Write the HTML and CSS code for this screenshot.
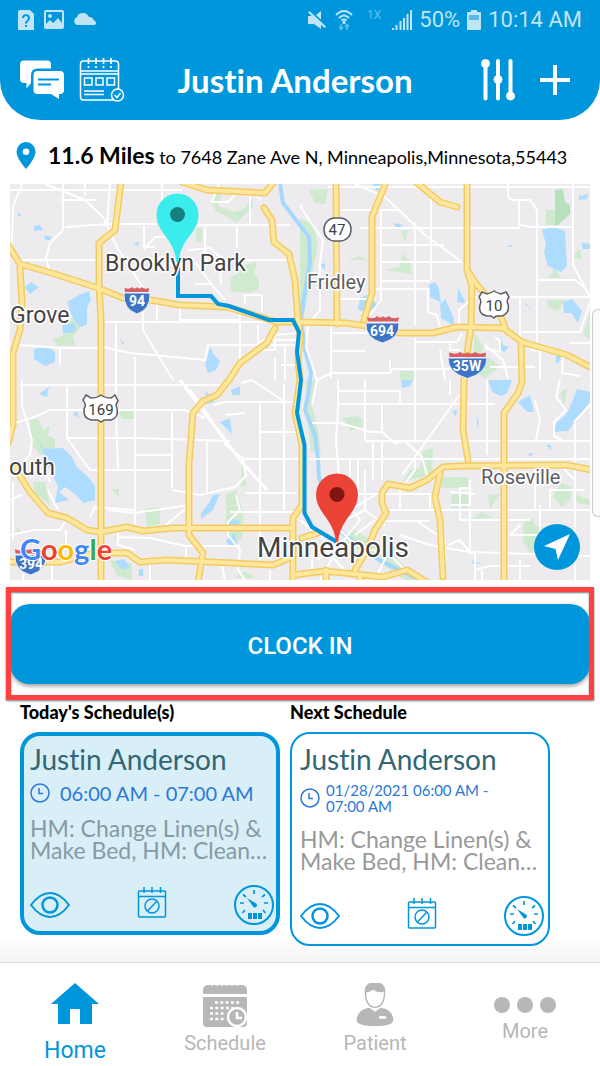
FILE: index.html
```html
<!DOCTYPE html>
<html lang="en">
<head>
<meta charset="utf-8">
<meta name="viewport" content="width=device-width, initial-scale=1">
<title>Home</title>
<link rel="stylesheet" href="styles.css">
</head>
<body>
<header class="header">
  <div class="status">
    <div class="status-group status-left">
      <svg width="16" height="20" viewBox="0 0 16 20"><path fill="currentColor" fill-rule="evenodd" d="M2 0H12L16 4V20H1Q0 20 0 19V2Q0 0 2 0ZM4 8H6Q6 6 8 6T10 8Q10 9.300 8.500 10.500Q7 11.600 7 13.500H9Q9 12.400 10.500 11Q12 9.800 12 8Q12 4.200 8 4.200T4 8ZM7 15V17H9V15Z"/></svg>
      <svg width="20" height="20" viewBox="0 0 20 20"><path fill="currentColor" fill-rule="evenodd" d="M2 0H18Q20 0 20 2V17Q20 19 18 19H2Q0 19 0 17V2Q0 0 2 0ZM2 2V14L6 10L9 13L14 8L18 13V2ZM6 4A2 2 0 1 1 6 8A2 2 0 1 1 6 4Z"/></svg>
      <svg width="22" height="20" viewBox="0 0 22 20"><path fill="currentColor" d="M4 15A4 4 0 0 1 3 7.200Q4 3 9 3Q13 3 15 7Q19 7 19.500 10Q22 11 22 13Q22 15 19 15Z"/></svg>
    </div>
    <div class="status-group status-right">
      <svg width="20" height="20" viewBox="0 0 20 20"><path fill="currentColor" d="M1 6H5L7 8L14 14V19L7 14H1ZM9 5L14 1V9.500ZM1 2.500L2.500 1L19 16.500L17.500 18Z"/></svg>
      <svg width="20" height="22" viewBox="0 0 20 22" fill="none" stroke="currentColor" stroke-width="2"><path d="M2 6Q10-2 18 6M5 9Q10 4 15 9M7.500 11.500Q10 9.500 12.500 11.500"/><circle cx="10" cy="13.500" r=".7"/><path opacity=".5" d="M7 15V20M5 18L7 20.500L9 18M13 21V16M11 18L13 15.500L15 18" stroke-width="1.500"/></svg>
      <span class="carrier">1X</span>
      <svg width="20" height="20" viewBox="0 0 20 20"><path fill="none" stroke="currentColor" stroke-width="2" d="M1 20V18M4.500 20V15M8.500 20V11M12 20V8M15.500 20V4M19 20V0"/></svg>
      <span>50%</span>
      <svg width="14" height="20" viewBox="0 0 14 20"><path fill="currentColor" d="M4 0H10V2H13Q14 2 14 3V19Q14 20 13 20H1Q0 20 0 19V3Q0 2 1 2H4Z"/><path fill="#5cb9e6" d="M2 5H12V10H2Z"/></svg>
      <span>10:14 AM</span>
    </div>
  </div>
  <div class="titlebar">
    <div class="tools">
      <button class="icon-button" aria-label="Messages"><svg width="44" height="40" viewBox="20 60 44 40"><path fill="#fff" d="M24 60.500H47Q51 60.500 51 64.500V82H32L26.500 88.500V83H24Q20 83 20 79V64.500Q20 60.500 24 60.500Z"/><path fill="#fff" stroke="#0096dc" stroke-width="5" paint-order="stroke" d="M37.500 71H60Q64 71 64 75V90Q64 94 60 94H59V99L51 94H37.500Q33.500 94 33.500 90V75Q33.500 71 37.500 71Z"/><path stroke="#0096dc" stroke-width="2" d="M38 79.500H59M38 84.500H51"/></svg></button>
      <button class="icon-button" aria-label="Calendar"><svg width="46" height="46" viewBox="79 57 46 46" fill="none" stroke="#fff" stroke-width="1.500"><rect x="80.500" y="61" width="38" height="39" rx="3"/><path stroke-width="1.700" d="M88.500 58V64M96 58V64M103.500 58V64M111 58V64M88.500 66V68M96 66V68M103.500 66V68M111 66V68M81 71H118M81 74H118M84 91H104M84 94.500H104"/><path d="M84.500 78H92V85H84.500ZM96 78H103V85H96ZM107 78H114.500V85H107Z"/><circle cx="117.500" cy="95" r="6" fill="#0096dc"/><path d="M114.500 95L117 97.500L120.500 93"/></svg></button>
    </div>
    <h1 class="title">Justin Anderson</h1>
    <div class="tools tools-right">
      <button class="icon-button" aria-label="Filters"><svg width="34" height="42" viewBox="481 59 34 42" fill="#fff" stroke="#fff"><path stroke-width="4" stroke-linecap="round" d="M485.500 62V98.500M498 61V98.500M510.500 61V98"/><circle cx="485.500" cy="63.500" r="4"/><circle cx="498" cy="79.500" r="4"/><circle cx="510.500" cy="96" r="4"/></svg></button>
      <button class="icon-button" aria-label="Add"><svg width="30" height="30" viewBox="0 0 30 30"><path stroke="#fff" stroke-width="4" d="M15 0V30M0 15H30"/></svg></button>
    </div>
  </div>
</header>

<main class="content">
  <p class="address">
    <svg width="20" height="28" viewBox="0 0 20 28"><path fill="#0096dc" fill-rule="evenodd" d="M10 0A9.700 9.700 0 0 1 19.500 10Q19.500 16 10 27Q.5 16 .5 10A9.700 9.700 0 0 1 10 0ZM10 6.500A3.300 3.300 0 1 0 10 13.100A3.300 3.300 0 1 0 10 6.500Z"/></svg>
    <span><strong>11.6 Miles</strong> to 7648 Zane Ave N, Minneapolis,Minnesota,55443</span>
  </p>

  <section class="map" aria-label="Route map">
    <svg class="map-art" viewBox="10 184 580 396">
      <defs>
        <path id="highways" d="M8 245L20 264L55 274L98 288L123 298L150 300L180 305L227 307L277 322L300 322L345 323L367 326L400 333L433 333L457 327L503 328L522 342L567 355L592 368M20 268L22 300L20 330L13 353V425L8 443M121 182L115 230L99 243V285L101 320V582M182 182L207 190L265 193L274 182M264 208L272 220L274 242L289 254L295 280L298 322L300 335L298 360L300 380L295 413L302 445L302 505L293 518V582M275 328L267 343L240 363L229 380L217 395L203 401L193 413L189 463V535L203 553L198 582M15 468L30 492L48 513L67 518L87 530L100 532L127 527L143 531L173 528H293M8 562H60L95 553H127L140 562L167 560L233 563L273 565L292 557M336 182L337 324M386 182L372 217V293L364 320M416 182L440 202L457 207M467 182V270L472 287L471 327L468 347L464 380L463 430L468 460M467 270L477 285L497 307L505 327M521 343L522 382L518 393L504 413V582M592 470L567 465L460 466L443 467L427 480L410 488L388 484L382 493V503L386 513L375 530L367 550L355 570M440 473L435 497L440 520L443 577M293 575L325 571L383 577L407 570L430 584M326 570V582M360 577V582M302 538L318 533"/>
      </defs>
      <rect x="10" y="184" width="580" height="396" fill="#eeebef"/>
      <g fill="#cfeacf">
        <path d="M215 194L222 193L218 206L234 212L244 209L252 199L253 207L244 215L236 223L228 217L216 211L212 204Z"/>
        <path d="M196 228H202V242H196ZM230 278L239 272L243 265L257 262L254 273L259 281V289L249 293L231 291Z"/>
        <path d="M67 320L77 317L80 328L73 336L75 345L57 346L53 339L66 334Z"/>
        <path d="M30 418L38 419L43 430L50 426L48 435L55 439V448L40 455L31 443Z"/>
        <path d="M309 190L328 189L325 204L315 203ZM300 218L314 225L318 245L310 285L304 315H300ZM348 260L359 256L368 260ZM401 231L408 230L405 243ZM402 253L410 261L412 274L385 270L400 267Z"/>
        <path d="M546 210H555V225H546ZM573 257L580 248L582 260ZM548 278L555 267L561 278ZM547 300H565L558 311L548 307ZM583 335L590 312V340ZM474 333L484 347L478 358H490L500 367L485 378L474 371Z"/>
        <path fill="#b7e1bd" d="M555 190L563 189L565 202L570 205V214L558 225H555Z"/>
        <path d="M305 380H315L312 405L318 430L321 453L311 452L307 415ZM343 418L357 416L363 420L362 428L350 431ZM423 451L433 448L432 475L403 481L410 469L420 468ZM440 477H468V488H442ZM452 494H468V508H451ZM488 495L500 494L490 508ZM471 519L482 512L492 518Z"/>
        <path d="M523 522L533 519L536 526L545 528L540 548L530 553L523 542ZM553 496L561 482L573 488L570 500L562 507ZM575 494L590 500V505L577 503ZM400 371H414V380H400ZM560 393L567 388L564 407Z"/>
        <path d="M120 411H134V419H121ZM111 489H119V498ZM145 509L160 507V524L147 527ZM226 494L236 490L243 512V535L236 545L228 537L226 522ZM33 482H45L50 505L34 492ZM242 463L247 485L241 488ZM110 560L132 563V580L117 576ZM15 525L21 531L18 537ZM245 571L256 578H235ZM353 529L385 548L420 580H405L380 563L345 541Z"/>
      </g>
      <g fill="#addcff">
        <path d="M67 302L79 295L89 291L91 300L87 308V325L80 327L73 318ZM62 325L75 323L76 331L63 334ZM17 278L25 287L31 282L39 287L30 294ZM34 349L47 346L55 352V362L45 366L34 359ZM34 226L40 225L43 230L34 231ZM44 235L52 237L50 240L45 240Z"/>
        <path d="M205 365L210 347L214 355L220 361L216 370L208 373ZM18 211L21 216H18ZM72 287L75 293ZM134 243L140 242L137 246ZM120 338L125 345L122 344ZM39 394L49 387L47 397ZM73 414L77 411L79 418ZM111 421L117 429L113 424Z"/>
        <path d="M36 435L43 449L63 448L72 457L77 467L88 477L95 486V500L83 503L75 494L65 487L59 492L69 500L55 503L58 486L51 473Z"/>
        <path d="M542 230L553 227L565 231L566 250L567 266L561 272L548 266L544 253L546 244ZM579 196L588 194L587 199L579 200ZM582 243L590 244V249H582ZM393 223L404 225L397 228ZM429 285L435 282L439 288L441 304L445 299L449 307L454 319V326L441 318L440 302L430 297ZM458 287L466 304L457 302ZM563 302L572 299L582 311L578 323L571 313L564 313ZM557 347L561 360L556 364V350ZM360 298L367 295L379 306L367 312L358 310ZM319 265L325 263V270ZM372 184H381L378 192ZM524 301L532 310L526 305ZM506 247L512 245V247ZM500 335L503 345L509 347L504 352L500 350Z"/>
        <path d="M488 380H512L507 393L501 396L492 392ZM518 402L530 395L534 412L527 412ZM577 389L590 392V402L579 416L568 431L553 432L557 422L566 415L573 400ZM401 380H413L410 386L402 388ZM476 416L479 422L478 429ZM546 444L552 446L550 450ZM527 455L532 452V456ZM472 560L481 564H473ZM452 411L457 410L456 417ZM220 422L230 418L232 434ZM231 390L240 386V395H232ZM205 390L215 402L207 404ZM201 513L209 503L213 495L220 494L213 510L201 519ZM230 519L240 520L237 529L229 527ZM226 541L235 532L237 545L230 547ZM115 561L124 559L130 567L122 570ZM139 569H143V576H139Z"/>
      </g>
      <path fill="none" stroke="#a6d8ff" stroke-width="4" d="M280 184L283 203L299 224L309 237L310 262L305 290L301 320L305 350L311 372L309 390L305 410L315 435L318 460L319 478L342 533L381 561L420 580"/>
      <g fill="none" stroke="#fff" stroke-width="2" stroke-linejoin="round">
        <path d="M10 190H182M22 184L13 207L12 243M63 184V230L50 243L46 258L50 273M45 184L85 200L103 217L117 247L143 288V330L173 380M65 227L110 224H157M197 225H290M144 226V247H155M20 260H97M205 260H295M105 322H275M20 345L60 348H100M100 346L130 353L205 360L208 345H297M116 322V410L118 472M135 357V525M60 348V365M157 303V322M180 305V320H240"/>
        <path d="M144 249L155 237H170M195 262L212 285L225 300M188 250L210 248L220 257L221 285M237 225V248M250 225V190L261 200M219 184L212 202H228L235 195M240 308V360M258 325V350H275V335L298 333M245 304V295H262V312M285 345V380M275 358V380M257 345L263 340H298M281 365H300M195 284H213M60 200H97M85 184V195M110 184L107 225M162 184V205M205 227V260"/>
        <path d="M328 187H590M341 210H400M360 228H520M380 245H444M380 262H462M380 281H430M370 289H430M340 299H375M381 210V300L370 315M415 222V325M431 196V280M428 289V312L437 315L440 327M355 184L385 197L425 235L462 262M537 227V350M508 184V195Q508 200 515 200H530L537 210V227M573 184V265L590 297M519 200V225L532 227H572M537 280H575L585 288M475 297H590M520 332H580L590 303M570 343H590M520 297V340"/>
        <path d="M300 205L307 217L323 240L320 263V310L308 325L306 347L317 380L312 405M331 325V378M330 333H370M331 351H365M317 380L332 373H390L392 369H460M415 338V380M416 342H457L462 333M390 360V369M450 342V350H460M440 350L445 380M485 345L503 360L508 378M530 350L563 353L562 373L580 376M490 367H535M540 350V380M470 300L459 310V330M495 338L500 340V352L485 348"/>
        <path d="M22 380V405L32 440L30 455L15 470M10 500L22 495M15 423L32 418L50 410H100M20 385H230M118 410H185L205 418M67 384V438M67 438H140L230 441M67 438L90 470H170M136 455H172M172 412V488M172 490L200 495L235 487L246 476L243 458L225 445V437M207 441V492M213 405L225 402H297M260 402V525M284 384V510M260 432H297M245 459H300M246 493H297M230 512H297M108 510L135 513L190 505M241 383L252 380L285 402M225 415L245 413"/>
        <path d="M10 535L35 530L60 530L67 518M90 517L95 507L135 510M118 530V545L135 550M118 537L150 538L185 546H240M186 547V560M13 482V540M48 490L58 510M47 472L50 482M236 495L240 510L228 522V535L240 550L238 570L245 580M25 540L23 580M66 530V550M52 562V580M160 530L190 505M222 565L225 580M260 527V560M270 570V580M150 562V580"/>
        <path d="M338 391H400V403M338 404H495M365 380V440M338 380V410L336 440L339 475M415 380V440M450 380V395M460 394L402 475M365 441H590M310 459H590M350 494H430V510M390 510H590M312 423H340L371 432H382L395 443L405 441L422 457L427 475M487 380V455M535 400L540 420L536 440M382 404V432M350 459V480M358 459V500M365 470V510M373 440V480M382 441V480M415 455V470L400 490V510M560 380L556 397L566 410L554 422V436L565 442"/>
        <path d="M470 480V505H451M470 488H460V520H530M470 510V555M448 545L460 540L470 552L590 556M380 521H430M400 535L430 545L475 553V580M415 520L445 540V580M575 420V580M574 422L590 405M540 505V535M550 510V490H585M520 525L510 535H555L560 560M535 465V510M560 465L575 480V510M475 570L490 566H530M482 570V580M520 560V580M350 510L375 495M345 520L365 510L385 525M340 530L355 545L390 555L410 575M330 555L350 575M318 560L340 545M312 555V575M345 500L360 520L340 545L320 580M386 557L375 580M300 520L325 540M355 535L375 520M450 492L475 494"/>
      </g>
      <path fill="none" stroke="#fff" stroke-width="3" d="M180 380L240 460L267 490M190 390L222 436"/>

      <g fill="none" stroke-linejoin="round" stroke-linecap="round">
        <use href="#highways" stroke="#f2cc62" stroke-width="7"/>
        <use href="#highways" stroke="#fee69c" stroke-width="4"/>
      </g>
      <path fill="none" stroke="#0096dc" stroke-width="4" d="M178 260V296H211L218 304L229 306L269 320H293L299 332L297 352L301 380L297 413L304.500 445V513L312 527L337 542"/>

      <g class="interstate">
        <path fill="#3b75c4" stroke="#eef" d="M124 293H150Q151 309 137 314Q123 309 124 293Z"/><path fill="#d75f63" d="M125 292L124.500 288Q130 290 132 287Q135 290 137 287Q139 290 142 287Q144 290 149 288L148.500 292Z"/><text x="137" y="306">94</text>
        <path fill="#3b75c4" stroke="#eef" d="M366 323H399Q400 338 382.500 343Q365 338 366 323Z"/><path fill="#d75f63" d="M368 321.500L367 317Q374 320 377 316Q381 319 383 316Q385 319 389 316Q392 320 399 317L398 321.500Z"/><text x="382" y="336">694</text>
        <path fill="#3b75c4" stroke="#eef" d="M448 358H487Q487 373 467.500 378.500Q448 373 448 358Z"/><path fill="#d75f63" d="M449.500 357L449 352.500Q456 355 460 352Q465 355 467.500 352Q470 355 475 352Q479 355 486 352.500L485.500 357Z"/><text x="467" y="371">35W</text>
        <path fill="#3b75c4" stroke="#eef" d="M15 555H46Q47 570 30.500 575Q14 570 15 555Z"/><path fill="#d75f63" d="M15.500 553.500L15 549Q21 552 25 549Q28 551 31 549Q34 551 37 549Q41 552 46 549L45.500 553.500Z"/><text x="31" y="569">394</text>
      </g>
      <g class="route-sign" stroke-width="1.500">
        <rect x="324" y="218" width="27" height="23" rx="11"/><text x="337" y="235">47</text>
        <path d="M482 292L487 294Q491 293 494 291Q497 293 501 294L506 292L509 297Q506 301 508 304Q510 313 502 316L496 316L494 318L491 316H487Q478 314 480 305Q482 301 479 297Z"/><text x="494" y="311">10</text>
        <path d="M86 395L91 398Q97 398 101 395Q105 398 111 398L115 395L118 401Q115 405 117 408Q119 418 111 420L104 420L101 422L98 420H91Q83 418 84 409Q87 405 83 400Z"/><text x="101" y="415">169</text>
      </g>
      <g class="place">
        <text x="105" y="271" font-size="23">Brooklyn Park</text>
        <text x="10" y="323" font-size="23">Grove</text>
        <text x="9" y="475" font-size="23">outh</text>
        <text x="257" y="557" font-size="28">Minneapolis</text>
        <g class="minor"><text x="307" y="289" font-size="20">Fridley</text><text x="481" y="484" font-size="20">Roseville</text></g>
      </g>
      <path fill="#3aecec" d="M177.500 193.500A21 21 0 0 1 198.500 214.500C198.500 233 181 238 178.500 262H176.500C174 238 156.500 233 156.500 214.500A21 21 0 0 1 177.500 193.500Z"/><circle cx="177.500" cy="214.500" r="7.500" fill="#168080"/>
      <path fill="#eb4335" d="M337 473.500A21 21 0 0 1 358 494.500C358 513 340.500 518 338 542H336C333.500 518 316 513 316 494.500A21 21 0 0 1 337 473.500Z"/><circle cx="337" cy="494.500" r="7.500" fill="#811411"/>
      <text class="google" x="20" y="560"><tspan fill="#4285f4">G</tspan><tspan fill="#ea4335">o</tspan><tspan fill="#fbbc05">o</tspan><tspan fill="#4285f4">g</tspan><tspan fill="#34a853">l</tspan><tspan fill="#ea4335">e</tspan></text>
    </svg>
    <button class="locate" aria-label="Navigate"><svg width="26" height="26" viewBox="0 0 26 26"><path fill="#fff" d="M26 0L14 26L11.500 15L0 12Z"/></svg></button>
  </section>

  <div class="clock"><button class="clock-button">CLOCK IN</button></div>

  <div class="schedules">
    <section class="schedule">
      <h2>Today's Schedule(s)</h2>
      <article class="card card-today">
        <h3>Justin Anderson</h3>
        <p class="time"><svg width="20" height="20" viewBox="0 0 20 20" fill="none" stroke="currentColor" stroke-width="1.500"><circle cx="10" cy="10" r="9"/><path d="M9 5V10.500H13"/></svg><span>06:00 AM - 07:00 AM</span></p>
        <p class="tasks">HM: Change Linen(s) &amp;<br>Make Bed, HM: Clean…</p>
        <div class="actions">
          <button class="icon-button" aria-label="View"><svg width="40" height="40" viewBox="0 0 40 40" fill="none" stroke="#0096dc" stroke-width="2"><path d="M1 20Q10 8 20 8T39 20Q30 32 20 32T1 20Z"/><circle cx="20" cy="20" r="7.500" stroke-width="2.500"/></svg></button>
          <button class="icon-button" aria-label="Cancel visit"><svg width="30" height="40" viewBox="0 0 30 40" fill="none" stroke="#0096dc" stroke-width="1.500"><rect x="1.500" y="6" width="27" height="26" rx="1"/><path d="M1.500 11.500H28.500M7 2V8M15 2V8M23.500 2V8M10.500 26L19.500 16.500"/><circle cx="15" cy="21" r="7"/></svg></button>
          <button class="icon-button" aria-label="Mileage"><svg width="40" height="40" viewBox="0 0 40 40" fill="none" stroke="#0096dc" stroke-width="2"><circle cx="20" cy="20" r="19"/><path stroke-width="1.700" d="M20 5V9M9 9.500L12 12M31 9.500L28 12M6 18H10M30 18H34M8.500 28L11 25M31.500 28L29 25"/><path stroke-width="4" d="M16 28V34M21 28V34M26 28V34"/><path fill="#0096dc" stroke="none" d="M13 13L22 18.500A2 2 0 0 1 19.500 22Z"/></svg></button>
        </div>
      </article>
    </section>
    <section class="schedule">
      <h2>Next Schedule</h2>
      <article class="card">
        <h3>Justin Anderson</h3>
        <p class="time time-long"><svg width="20" height="20" viewBox="0 0 20 20" fill="none" stroke="currentColor" stroke-width="1.500"><circle cx="10" cy="10" r="9"/><path d="M9 5V10.500H13"/></svg><span>01/28/2021 06:00 AM -<br>07:00 AM</span></p>
        <p class="tasks">HM: Change Linen(s) &amp;<br>Make Bed, HM: Clean…</p>
        <div class="actions">
          <button class="icon-button" aria-label="View"><svg width="40" height="40" viewBox="0 0 40 40" fill="none" stroke="#0096dc" stroke-width="2"><path d="M1 20Q10 8 20 8T39 20Q30 32 20 32T1 20Z"/><circle cx="20" cy="20" r="7.500" stroke-width="2.500"/></svg></button>
          <button class="icon-button" aria-label="Cancel visit"><svg width="30" height="40" viewBox="0 0 30 40" fill="none" stroke="#0096dc" stroke-width="1.500"><rect x="1.500" y="6" width="27" height="26" rx="1"/><path d="M1.500 11.500H28.500M7 2V8M15 2V8M23.500 2V8M10.500 26L19.500 16.500"/><circle cx="15" cy="21" r="7"/></svg></button>
          <button class="icon-button" aria-label="Mileage"><svg width="40" height="40" viewBox="0 0 40 40" fill="none" stroke="#0096dc" stroke-width="2"><circle cx="20" cy="20" r="19"/><path stroke-width="1.700" d="M20 5V9M9 9.500L12 12M31 9.500L28 12M6 18H10M30 18H34M8.500 28L11 25M31.500 28L29 25"/><path stroke-width="4" d="M16 28V34M21 28V34M26 28V34"/><path fill="#0096dc" stroke="none" d="M13 13L22 18.500A2 2 0 0 1 19.500 22Z"/></svg></button>
        </div>
      </article>
    </section>
  </div>
  <div class="edge-handle"></div>
</main>

<nav class="tabs">
  <a class="tab tab-active" href="#home"><svg width="48" height="42" viewBox="0 0 48 42"><path fill="currentColor" d="M24 0L48 21H41V41H29V26H19V41H7V21H0Z"/></svg><span>Home</span></a>
  <a class="tab" href="#schedule"><svg width="44" height="44" viewBox="0 0 44 44"><path fill="currentColor" d="M4 2H40Q44 3 44 7V11H0V7Q0 3 4 2ZM0 14H44V40Q44 44 40 44H4Q0 44 0 40Z"/><path stroke="#fff" stroke-width="1.500" stroke-dasharray="2 3" d="M8 2H36"/><path stroke="#fff" stroke-width="2.500" stroke-dasharray="3 2.300" d="M12 19.500H38M7 25H30M7 30.500H23M7 36H23"/><circle cx="34" cy="34" r="9" fill="currentColor" stroke="#fff" stroke-width="2.500"/><path fill="none" stroke="#fff" stroke-width="2.500" d="M34 29V35H39"/></svg><span>Schedule</span></a>
  <a class="tab" href="#patient"><svg width="40" height="44" viewBox="0 1 40 46"><path fill="currentColor" d="M1 38Q2 29 14 27L20 31L26 27Q38 29 39 38Q41 46 20 46T1 38Z"/><path fill="#fff" stroke="currentColor" stroke-width="1.500" d="M10 11Q9 1 20 1T30 11Q30 21 25 25Q20 28 15 25Q10 21 10 11Z"/><path fill="currentColor" d="M10 11Q9 1 20 1T30 10Q24 12 18 8Q14 11 10 11Z"/><ellipse cx="28" cy="37" rx="4" ry="1.500" fill="#fff"/></svg><span>Patient</span></a>
  <a class="tab tab-more" href="#more"><svg width="62" height="16" viewBox="0 0 62 16" fill="currentColor"><circle cx="8" cy="8" r="8"/><circle cx="31" cy="8" r="8"/><circle cx="54" cy="8" r="8"/></svg><span>More</span></a>
</nav>
</body>
</html>
```
FILE: styles.css
```css
* { box-sizing: border-box; }
body {
  margin: 0;
  min-height: 100vh;
  display: flex;
  flex-direction: column;
  background: #fff;
  font-family: Lato, "Open Sans", sans-serif;
  font-variant-ligatures: none;
  color: #000;
}
h1, h2, h3, p { margin: 0; }
svg { display: block; flex: none; }
button { font: inherit; cursor: pointer; }
.icon-button { padding: 0; border: 0; background: none; }

.header {
  background: #0096dc;
  border-radius: 0 0 40px 40px;
  color: #fff;
}
.status {
  display: flex;
  justify-content: space-between;
  height: 40px;
  padding: 0 18px;
  color: #bfe5f6;
  font-family: Roboto, sans-serif;
  font-size: 22px;
  line-height: 42px;
}
.status-group { display: flex; align-items: center; }
.status-left { gap: 10px; }
.status-right { gap: 7px; }
.carrier { font-size: 12px; line-height: 12px; padding: 0 4px 10px 6px; opacity: .5; }
.titlebar {
  display: grid;
  grid-template-columns: 1fr auto 1fr;
  align-items: center;
  height: 80px;
  padding: 0 30px 0 20px;
}
.tools { display: flex; align-items: center; gap: 15px; }
.tools-right { justify-content: flex-end; gap: 25px; }
.title { font-size: 33px; line-height: 40px; font-weight: 700; }

.content { position: relative; flex: 1; background: linear-gradient(#fff 0 97%, #f4f4f4); }
.address {
  display: flex;
  align-items: center;
  gap: 12px;
  height: 64px;
  padding: 8px 16px 0;
  font-size: 18px;
  line-height: 24px;
  white-space: nowrap;
}
.address strong { font-size: 23px; }

.map { position: relative; margin: 0 10px; }
.map-art { width: 100%; height: auto; font-family: Roboto, sans-serif; }
.interstate text { fill: #fff; font-size: 14px; font-weight: 700; text-anchor: middle; }
.route-sign { fill: #fff; stroke: #5c5f64; }
.route-sign text { fill: #3c4043; stroke: none; font-size: 15px; text-anchor: middle; }
.place text { fill: #444; stroke: #fff; stroke-width: 3px; stroke-linejoin: round; paint-order: stroke; }
.place .minor text { fill: #5c5f64; }
.google { font-family: Lato, sans-serif; font-size: 29px; font-weight: 700; stroke: #fff; stroke-width: 2px; paint-order: stroke; }
.locate {
  position: absolute;
  right: 10px;
  bottom: 10px;
  width: 46px;
  height: 46px;
  padding: 0;
  border: 0;
  border-radius: 50%;
  background: #0096dc;
  display: grid;
  place-items: center;
}

.clock { position: relative; padding: 24px 10px 20px; }
.clock::after {
  content: "";
  position: absolute;
  inset: 7px 6px 4px;
  border: 5px solid #ff4040;
  box-shadow: 0 1px 2px #777, inset 0 1px 2px #777;
  pointer-events: none;
}
.clock-button {
  width: 100%;
  height: 80px;
  padding: 4px 0 0;
  border: 0;
  border-radius: 20px;
  background: #0096dc;
  box-shadow: 0 2px 4px #0006;
  color: #fff;
  font-family: Roboto, sans-serif;
  font-size: 24px;
  font-weight: 500;
}

.schedules { display: flex; align-items: flex-start; gap: 10px; padding: 0 20px 16px; }
.schedule { width: 260px; }
.schedule h2 { padding-bottom: 12px; font-size: 18px; line-height: 16px; font-weight: 900; white-space: nowrap; }
.card { padding: 8px; border: 2px solid #0096dc; border-radius: 20px; }
.card-today { padding: 6px; border-width: 4px; background: #d9eff8; }
.card h3 { font-size: 28px; line-height: 34px; font-weight: 400; color: #336675; white-space: nowrap; }
.time {
  display: flex;
  align-items: center;
  gap: 10px;
  height: 33px;
  color: #2a78d8;
  font-size: 20px;
  line-height: 24px;
  white-space: nowrap;
}
.time-long { gap: 6px; height: 44px; font-size: 15px; line-height: 16px; }
.tasks { padding-top: 8px; font-size: 23px; line-height: 22px; color: #999; white-space: nowrap; }
.card-today .tasks { color: #8799a3; }
.actions { display: flex; justify-content: space-between; margin-right: -4px; padding-top: 24px; }

.edge-handle {
  position: absolute;
  right: 0;
  top: 189px;
  width: 8px;
  height: 208px;
  border: 1px solid #ccc;
  border-right: 0;
  border-radius: 6px 0 0 6px;
  background: #fafafa;
}

.tabs {
  display: grid;
  grid-template-columns: repeat(4, 1fr);
  height: 104px;
  background: #fff;
  border-top: 1px solid #ddd;
  font-family: Roboto, sans-serif;
}
.tab {
  display: flex;
  flex-direction: column;
  align-items: center;
  gap: 4px;
  padding-top: 20px;
  color: #b8b6b7;
  font-size: 20px;
  line-height: 24px;
  text-decoration: none;
}
.tab-active { gap: 14px; color: #0096dc; font-size: 23px; }
.tab-more { gap: 6px; padding-top: 34px; }
```
